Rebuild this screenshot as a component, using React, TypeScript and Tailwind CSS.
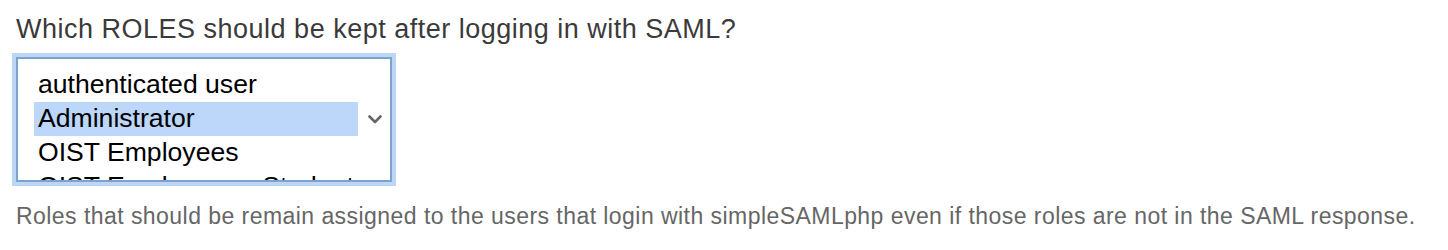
import React from 'react';

const roles = [
  'authenticated user',
  'Administrator',
  'OIST Employees',
  'OIST Employees - Students',
];

const selected = 'Administrator';

const RoleSelect: React.FC = () => {
  return (
    <div className="flex h-[125px] w-[376px] items-center border-2 border-[#7ba3cc] ring-4 ring-[#bcd6f7] bg-white">
      <div className="h-full w-[340px] overflow-hidden pl-[16px] pt-[9px]">
        {roles.map((role) => (
          <div
            key={role}
            className={`h-[34px] w-[324px] whitespace-nowrap px-[4px] text-[26.6px] leading-[33px] text-black ${
              role === selected ? 'bg-[#bcd7f9]' : ''
            }`}
          >
            {role}
          </div>
        ))}
      </div>
      <div className="ml-[10px] flex items-center">
        <svg width="14" height="9" viewBox="0 0 14 9" fill="none">
          <path d="M1.5 1.5 L7 7 L12.5 1.5" stroke="#666" strokeWidth="2.6" strokeLinecap="round" strokeLinejoin="round" />
        </svg>
      </div>
    </div>
  );
};

export default function App() {
  return (
    <div
      className="flex min-h-[250px] flex-col bg-white pl-4 pt-[13px]"
      style={{ fontFamily: '"Liberation Sans", Arial, Helvetica, sans-serif' }}
    >
      <label className="text-[27px] leading-[32px] tracking-[0.5px] text-[#3a3a3a]">
        Which ROLES should be kept after logging in with SAML?
      </label>
      <div className="mt-[12px]">
        <RoleSelect />
      </div>
      <p className="mt-[21px] text-[23px] leading-[26px] tracking-[0.45px] text-[#666666]">
        Roles that should be remain assigned to the users that login with simpleSAMLphp even if those roles are not in the SAML response.
      </p>
    </div>
  );
}
